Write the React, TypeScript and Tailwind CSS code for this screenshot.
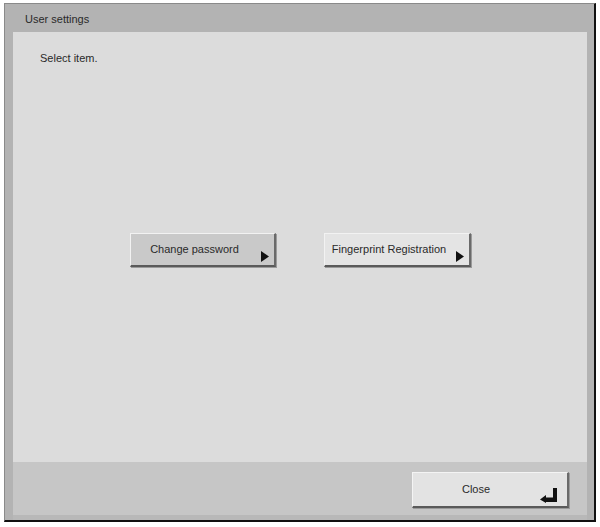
const font = { fontFamily: '"Liberation Sans", Arial, sans-serif' };

const Arrow = () => (
  <svg width="8" height="11" viewBox="0 0 8 11" className="absolute right-[5px] top-[17px]">
    <path d="M0 0 L8 5.5 L0 11 Z" fill="#111" />
  </svg>
);

const ReturnIcon = () => (
  <svg width="18" height="15" viewBox="0 0 18 15" className="absolute right-[9px] top-[15px]">
    <path d="M13 0 H17 V14 H6 V15 L0 11.5 L6 7 V9.5 H13 Z" fill="#111" />
  </svg>
);

const OptionButton = ({ label, dark, width }: { label: string; dark?: boolean; width: string }) => (
  <button
    className={`relative h-[34px] ${width} pr-[15px] text-[11px] text-[#2a2a2a] border-t border-l border-[#f2f2f2] border-r-2 border-b-2 border-r-[#6a6a6a] border-b-[#5a5a5a] shadow-[1px_1px_0_#9a9a9a] ${
      dark ? "bg-[#c9c9c9]" : "bg-[#e4e4e4]"
    }`}
  >
    {label}
    <Arrow />
  </button>
);

const App = () => {
  return (
    <div className="w-[600px] h-[527px] bg-white pt-[3px] pl-[4px]" style={font}>
      <div className="w-[592px] h-[519px] flex flex-col bg-[#b3b3b3] border-t border-l border-[#8a8a8a] border-r-2 border-b-2 border-r-[#111] border-b-[#111]">
        <div className="h-[28px] flex items-center pt-[3px] pl-[20px] text-[11px] text-[#2a2a2a]">User settings</div>
        <div className="flex-1 flex flex-col pl-[8px] pr-[7px]">
          <div className="h-[430px] bg-[#dcdcdc] pt-[18px] pl-[27px]">
            <div className="h-[16px] leading-[16px] text-[11px] text-[#2a2a2a]">Select item.</div>
            <div className="mt-[167px] flex justify-center gap-[48px] pr-[27px]">
              <OptionButton label="Change password" dark width="w-[146px]" />
              <OptionButton label="Fingerprint Registration" width="w-[147px]" />
            </div>
          </div>
          <div className="h-[53px] bg-[#c6c6c6] flex justify-end items-start pt-[10px] pr-[18px]">
            <button className="relative w-[157px] h-[36px] pr-[28px] bg-[#e3e3e3] text-[11px] text-[#2a2a2a] border-t border-l border-[#f4f4f4] border-r-2 border-b-2 border-r-[#6a6a6a] border-b-[#5a5a5a] shadow-[1px_1px_0_#9a9a9a]">
              Close
              <ReturnIcon />
            </button>
          </div>
          <div className="flex-1 bg-[#b8b8b8]" />
        </div>
      </div>
    </div>
  );
};

export default App;
